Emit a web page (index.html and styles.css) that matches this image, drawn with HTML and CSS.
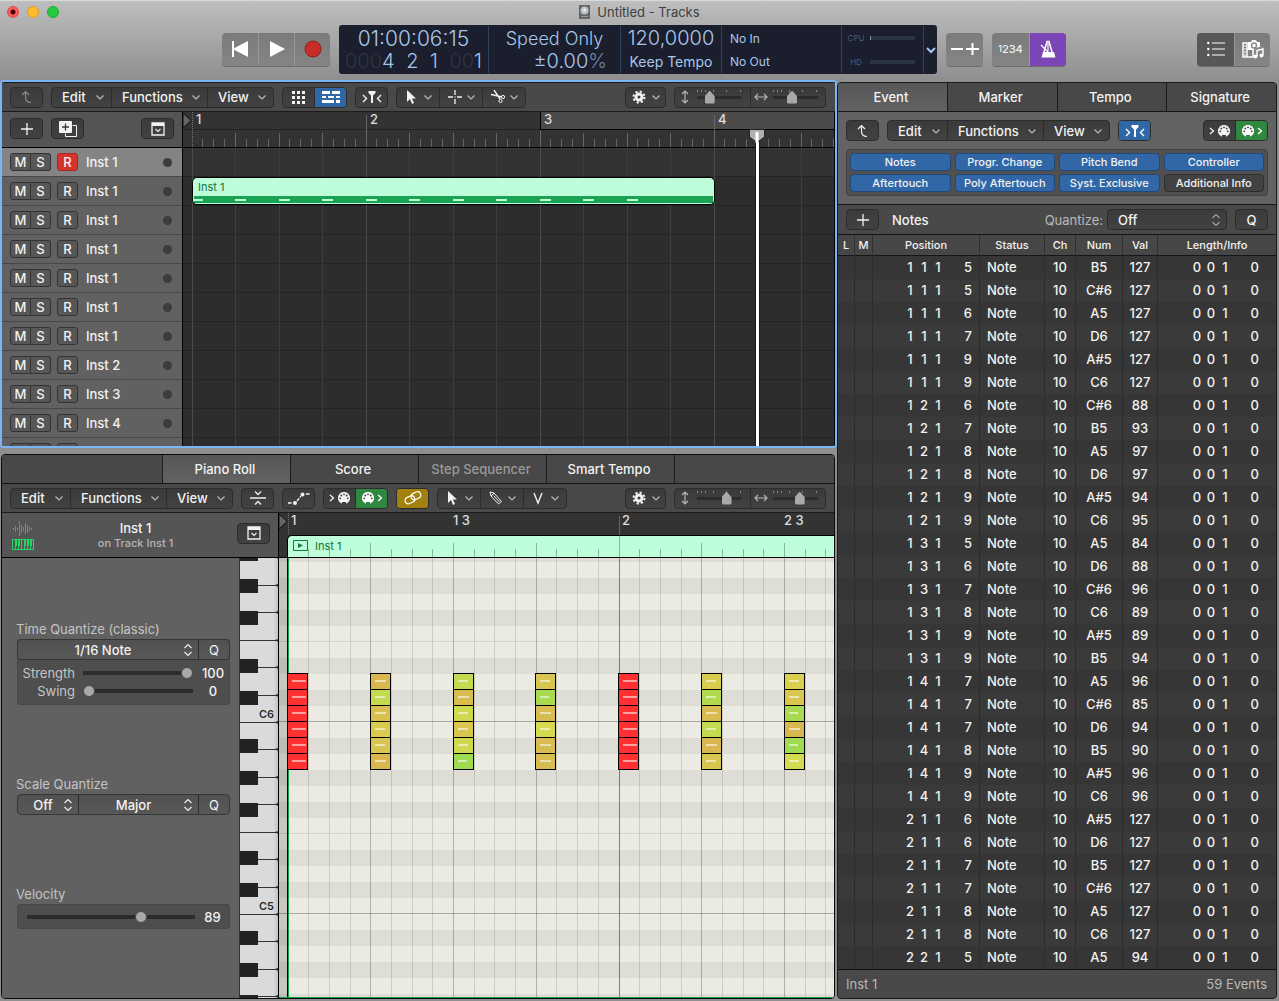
FILE: index.html
```html
<!DOCTYPE html>
<html lang="en">
<head>
    <meta charset="UTF-8">
    <meta name="viewport" content="width=device-width, initial-scale=1.0">
    <title>Untitled - Tracks</title>
    <link rel="stylesheet" href="styles.css">
</head>
<body>

    <!-- Icons -->
    <svg class="sprite" aria-hidden="true">
        <symbol id="caret" viewBox="0 0 10 10"><path d="M1.5 3.5 5 7l3.5-3.5" fill="none" stroke="currentColor" stroke-width="1.2"/></symbol>
        <symbol id="updown" viewBox="0 0 10 14"><path d="M1.5 5 5 1.5 8.5 5M1.5 9 5 12.5 8.5 9" fill="none" stroke="currentColor" stroke-width="1.1"/></symbol>
        <symbol id="hook" viewBox="0 0 16 16"><path d="M3 6 6.5 2.5 10 6M6.5 3v5c0 3.500 2 5.500 5.500 5.500" fill="none" stroke="currentColor" stroke-width="1.2"/></symbol>
        <symbol id="grid" viewBox="0 0 14 14"><path d="M0 1h3v3H0zM5 1h3v3H5zM10 1h3v3h-3zM0 6h3v3H0zM5 6h3v3H5zM10 6h3v3h-3zM0 11h3v3H0zM5 11h3v3H5zM10 11h3v3h-3z" fill="currentColor"/></symbol>
        <symbol id="rows" viewBox="0 0 18 14"><path d="M0 1h8v3H0zM10 1h8v3h-8zM0 6h4v2H0zM6 6h6v2H6zM14 6h4v2h-4zM0 10h12v3H0zM14 10h4v3h-4z" fill="currentColor"/></symbol>
        <symbol id="catch" viewBox="0 0 20 16"><path d="M6.500 2h7v2l-2.500 2.500V14H9V6.500L6.500 4z" fill="currentColor"/><path d="m1 6 3.500 3.500L1 13M19 6l-3.500 3.500L19 13" fill="none" stroke="currentColor" stroke-width="1.4"/></symbol>
        <symbol id="pointer" viewBox="0 0 12 16"><path d="M2 1v12l3-3 2 5 2-1-2-4.500h4z" fill="currentColor"/></symbol>
        <symbol id="cross" viewBox="0 0 14 14"><path d="M7 0v5M7 9v5M0 7h5M9 7h5M7 6.500v1" stroke="currentColor" stroke-width="1.3"/></symbol>
        <symbol id="scissors" viewBox="0 0 14 14"><path d="M0 4.500 11 7M3 0l6 9" stroke="currentColor" stroke-width="1.4"/><circle cx="12" cy="7" r="1.600" fill="none" stroke="currentColor"/><circle cx="9.500" cy="11" r="1.600" fill="none" stroke="currentColor"/></symbol>
        <symbol id="gear" viewBox="0 0 14 14"><circle cx="7" cy="7" r="5.500" fill="none" stroke="currentColor" stroke-width="2" stroke-dasharray="2.160 2.160"/><circle cx="7" cy="7" r="3" fill="none" stroke="currentColor" stroke-width="3"/></symbol>
        <symbol id="vzoom" viewBox="0 0 14 14"><path d="M7 1v12M4 4l3-3 3 3M4 10l3 3 3-3" fill="none" stroke="currentColor" stroke-width="1.2"/></symbol>
        <symbol id="hzoom" viewBox="0 0 14 14"><path d="M1 7h12M4 4 1 7l3 3M10 4l3 3-3 3" fill="none" stroke="currentColor" stroke-width="1.2"/></symbol>
        <symbol id="plus" viewBox="0 0 12 12"><path d="M6 0v12M0 6h12" stroke="currentColor" stroke-width="1.3"/></symbol>
        <symbol id="dup" viewBox="0 0 18 16"><path d="M13.500 4.500h4v11h-11v-3" fill="none" stroke="currentColor"/><path d="M1 0h11a1 1 0 0 1 1 1v10a1 1 0 0 1-1 1H1a1 1 0 0 1-1-1V1a1 1 0 0 1 1-1z" fill="currentColor"/><path d="M6.500 2.500v7M3 6h7" stroke="#3a3a3a" stroke-width="1.3"/></symbol>
        <symbol id="panel" viewBox="0 0 14 14"><path d="M1 1h12v12H1z" fill="none" stroke="currentColor" stroke-width="1.3"/><path d="M1 1h12v3H1z" fill="currentColor"/><path d="m4.500 7 2.500 2.500L9.500 7" fill="none" stroke="currentColor" stroke-width="1.2"/></symbol>
        <symbol id="midi-in" viewBox="0 0 22 14"><path d="m1 4 3.500 3L1 10" fill="none" stroke="currentColor" stroke-width="1.3"/><use href="#din" x="9" y="1" width="12" height="12"/></symbol>
        <symbol id="midi-out" viewBox="0 0 22 14"><path d="m17 4 3.500 3L17 10" fill="none" stroke="currentColor" stroke-width="1.3"/><use href="#din" x="1" y="1" width="12" height="12"/></symbol>
        <symbol id="din" viewBox="0 0 12 12"><path d="M6 0a6 6 0 0 1 4 10.500l-2 1.300V10H4v1.800l-2-1.300A6 6 0 0 1 6 0z" fill="currentColor"/><g fill="#3c3c3c"><circle cx="6" cy="2.300" r=".9"/><circle cx="3.300" cy="3.500" r=".9"/><circle cx="8.700" cy="3.500" r=".9"/><circle cx="2.200" cy="6.300" r=".9"/><circle cx="9.800" cy="6.300" r=".9"/></g></symbol>
        <symbol id="collapse" viewBox="0 0 16 16"><path d="M0 8h16M5 1.500 8 4.500l3-3M5 14.500l3-3 3 3" fill="none" stroke="currentColor" stroke-width="1.3"/></symbol>
        <symbol id="automation" viewBox="0 0 22 14"><path d="M0 12h4M18 3h4M9 10l4-5" stroke="currentColor" stroke-width="1.3" stroke-dasharray="3.500 1.200"/><circle cx="7" cy="12" r="2" fill="currentColor"/><circle cx="14.500" cy="3.500" r="2" fill="currentColor"/></symbol>
        <symbol id="link" viewBox="0 0 20 16"><g fill="none" stroke="currentColor" stroke-width="1.2"><rect x="8" y="2.500" width="10" height="6.500" rx="3.200" transform="rotate(-25 13 6)"/><rect x="2" y="6.500" width="10" height="6.500" rx="3.200" transform="rotate(-25 7 10)"/></g></symbol>
        <symbol id="pencil" viewBox="0 0 14 14"><path d="M1 1 2 5l7.500 8 3-2.500L5 2zM2 5l3-3M4.500 4.500l6 6.500" fill="none" stroke="currentColor"/></symbol>
        <symbol id="velocity" viewBox="0 0 12 14"><path d="M2 2 6 12 10 2" fill="none" stroke="currentColor" stroke-width="1.400"/></symbol>
    </svg>

    <header class="titlebar">
        <div class="title-row">
            <div class="lights">
                <button class="light close" aria-label="Close"></button>
                <button class="light minimize" aria-label="Minimize"></button>
                <button class="light full" aria-label="Full screen"></button>
            </div>
            <h1>
                <svg width="11" height="14" viewBox="0 0 11 14"><path d="M0 0h11v14H0z" fill="#656565"/><circle cx="5.500" cy="5.500" r="4" fill="#b9c2c9"/><circle cx="5.500" cy="5" r="1.500" fill="#edf2f5"/><path d="M2 11.500h7" stroke="#999"/></svg>
                Untitled - Tracks
            </h1>
        </div>

        <div class="control-row">
            <div class="center-controls">
                <div class="big-group">
                    <button aria-label="Go to beginning"><svg width="16" height="16" viewBox="0 0 16 16"><path d="M0 0h2v7.200L16 0v16L2 8.800V16H0z" fill="#fff"/></svg></button>
                    <button aria-label="Play"><svg width="16" height="16" viewBox="0 0 16 16"><path d="M1 0v16l15-8z" fill="#fff"/></svg></button>
                    <button aria-label="Record"><svg width="18" height="18" viewBox="0 0 18 18"><circle cx="9" cy="9" r="8" fill="#c82d28" stroke="#8f1f1b"/></svg></button>
                </div>

                <div class="lcd">
                    <div class="lcd-cell lcd-position">
                        <div class="lcd-clock">01:00:06:15</div>
                        <div class="lcd-big lcd-bars"><span><i>000</i>4</span><span>2</span><span>1</span><span><i>00</i>1</span></div>
                    </div>
                    <div class="lcd-cell lcd-speed">
                        <div class="lcd-text">Speed Only</div>
                        <div class="lcd-big lcd-percent">±0.00<em>%</em></div>
                    </div>
                    <div class="lcd-cell lcd-tempo">
                        <div class="lcd-big">120,0000</div>
                        <div class="lcd-mid">Keep Tempo</div>
                    </div>
                    <div class="lcd-cell lcd-io">
                        <div>No In</div>
                        <div>No Out</div>
                    </div>
                    <div class="lcd-cell lcd-load">
                        <div><span>CPU</span><b class="used"></b></div>
                        <div><span>HD</span><b></b></div>
                    </div>
                    <button class="lcd-more" aria-label="Display mode"><svg width="10" height="10"><path d="M1 3l4 4 4-4" fill="none" stroke="#a9c6ea" stroke-width="2"/></svg></button>
                </div>

                <div class="big-group">
                    <button class="wide" aria-label="Varispeed"><svg width="28" height="14" viewBox="0 0 28 14"><path d="M0 7h12M15 7h13M21.500 1v12" stroke="#fff" stroke-width="2"/></svg></button>
                </div>
                <div class="big-group">
                    <button class="count-in">1<b>234</b></button>
                    <button class="metronome" aria-label="Metronome"><svg width="18" height="18" viewBox="0 0 18 18"><path d="m5 12 3-10.500h2L13 12" fill="none" stroke="#fff" stroke-width="1.500"/><path d="M4 12h11l1.500 5.500h-14z" fill="#fff"/><path d="m2 5 8 8M9 3v8" stroke="#fff" stroke-width="1.200"/></svg></button>
                </div>
            </div>

            <div class="big-group right-controls">
                <button class="on" aria-label="List editors"><svg width="18" height="16" viewBox="0 0 18 16"><path d="M5 2h13M5 8h13M5 14h13" stroke="#fff" stroke-width="1.2"/><g fill="#fff"><circle cx="1.300" cy="2" r="1.200"/><circle cx="1.300" cy="8" r="1.200"/><circle cx="1.300" cy="14" r="1.200"/></g></svg></button>
                <button aria-label="Browsers"><svg width="22" height="20" viewBox="0 0 22 20"><path d="M1 4h4v14H1zM5 10h6v8H5z" fill="none" stroke="#fff" stroke-width="1.500"/><path d="M2 7h2M2 10h2M2 13h2M2 16h2" stroke="#fff"/><path d="M6 3h3l1-2h4l1 2h3v8H6z" fill="#fff"/><circle cx="12" cy="6.500" r="2.500" fill="#fff" stroke="#8a8a8a" stroke-width="1.400"/><path d="M14 17v-6l7-2v7" fill="none" stroke="#8a8a8a" stroke-width="4"/><path d="M15 17v-5.500l6-1.500v6" fill="none" stroke="#fff" stroke-width="1.400"/><circle cx="13.500" cy="17.500" r="2" fill="#fff"/><circle cx="19.500" cy="16.500" r="2" fill="#fff"/></svg></button>
            </div>
        </div>
    </header>

    <main>
        <div class="left-side">

            <!-- Tracks area -->
            <section class="tracks-panel">
                <div class="toolbar">
                    <div class="group"><button class="dim" aria-label="Up"><svg width="16" height="16"><use href="#hook"/></svg></button></div>
                    <div class="group menus">
                        <button>Edit <svg width="10" height="10"><use href="#caret"/></svg></button>
                        <button>Functions <svg width="10" height="10"><use href="#caret"/></svg></button>
                        <button>View <svg width="10" height="10"><use href="#caret"/></svg></button>
                    </div>
                    <div class="group">
                        <button aria-label="Grid"><svg width="14" height="14"><use href="#grid"/></svg></button>
                        <button class="blue" aria-label="Linear"><svg width="18" height="14"><use href="#rows"/></svg></button>
                    </div>
                    <div class="group"><button aria-label="Catch"><svg width="20" height="16"><use href="#catch"/></svg></button></div>
                    <div class="group tools">
                        <button aria-label="Pointer tool"><svg width="12" height="16"><use href="#pointer"/></svg><svg width="10" height="10"><use href="#caret"/></svg></button>
                        <button aria-label="Marquee tool"><svg width="14" height="14"><use href="#cross"/></svg><svg width="10" height="10"><use href="#caret"/></svg></button>
                        <button aria-label="Scissors tool"><svg width="14" height="14"><use href="#scissors"/></svg><svg width="10" height="10"><use href="#caret"/></svg></button>
                    </div>
                    <div class="group tools push"><button aria-label="Settings"><svg width="14" height="14"><use href="#gear"/></svg><svg width="10" height="10"><use href="#caret"/></svg></button></div>
                    <div class="group zooms">
                        <label><svg width="14" height="14"><use href="#vzoom"/></svg><input type="range" value="22" aria-label="Vertical zoom"></label>
                        <label><svg width="14" height="14"><use href="#hzoom"/></svg><input type="range" value="40" aria-label="Horizontal zoom"></label>
                    </div>
                </div>

                <div class="tracks-body">
                    <div class="track-column">
                        <div class="track-tools">
                            <div class="group"><button aria-label="Add track"><svg width="12" height="12"><use href="#plus"/></svg></button></div>
                            <div class="group"><button aria-label="Duplicate track"><svg width="18" height="16"><use href="#dup"/></svg></button></div>
                            <div class="group push"><button aria-label="Header options"><svg width="14" height="14"><use href="#panel"/></svg></button></div>
                        </div>
                        <div class="track-list" id="trackList"></div>
                    </div>
                    <div class="arrange">
                        <svg class="arrange-ruler" id="arrangeRuler"></svg>
                        <div class="arrange-canvas">
                            <div id="laneList"></div>
                            <svg class="beat-lines" id="beatLines"></svg>
                            <div class="region" id="region"><span>Inst 1</span><svg class="region-notes" id="regionNotes"></svg></div>
                        </div>
                        <div class="playhead"><svg width="16" height="14" viewBox="0 0 16 14"><path d="M.5.5h15V8L8 13.500.5 8z" fill="#b0b0b0" stroke="#222"/><path d="M6.500 3h3v11h-3z" fill="#fff"/></svg></div>
                    </div>
                </div>
            </section>

            <!-- Piano roll -->
            <section class="editor-panel">
                <nav class="tabs editor-tabs">
                    <span></span>
                    <button class="active">Piano Roll</button>
                    <button>Score</button>
                    <button disabled>Step Sequencer</button>
                    <button>Smart Tempo</button>
                    <span></span>
                </nav>
                <div class="toolbar">
                    <div class="group menus">
                        <button>Edit <svg width="10" height="10"><use href="#caret"/></svg></button>
                        <button>Functions <svg width="10" height="10"><use href="#caret"/></svg></button>
                        <button>View <svg width="10" height="10"><use href="#caret"/></svg></button>
                    </div>
                    <div class="group"><button aria-label="Collapse"><svg width="16" height="16"><use href="#collapse"/></svg></button></div>
                    <div class="group"><button aria-label="Automation"><svg width="22" height="14"><use href="#automation"/></svg></button></div>
                    <div class="group">
                        <button aria-label="MIDI in"><svg width="22" height="14"><use href="#midi-in"/></svg></button>
                        <button class="green" aria-label="MIDI out"><svg width="22" height="14"><use href="#midi-out"/></svg></button>
                    </div>
                    <div class="group"><button class="gold" aria-label="Link"><svg width="20" height="16"><use href="#link"/></svg></button></div>
                    <div class="group tools">
                        <button aria-label="Pointer tool"><svg width="12" height="16"><use href="#pointer"/></svg><svg width="10" height="10"><use href="#caret"/></svg></button>
                        <button aria-label="Pencil tool"><svg width="14" height="14"><use href="#pencil"/></svg><svg width="10" height="10"><use href="#caret"/></svg></button>
                        <button aria-label="Velocity tool"><svg width="12" height="14"><use href="#velocity"/></svg><svg width="10" height="10"><use href="#caret"/></svg></button>
                    </div>
                    <div class="group tools push"><button aria-label="Settings"><svg width="14" height="14"><use href="#gear"/></svg><svg width="10" height="10"><use href="#caret"/></svg></button></div>
                    <div class="group zooms">
                        <label><svg width="14" height="14"><use href="#vzoom"/></svg><input type="range" value="70" aria-label="Vertical zoom"></label>
                        <label><svg width="14" height="14"><use href="#hzoom"/></svg><input type="range" value="62" aria-label="Horizontal zoom"></label>
                    </div>
                </div>

                <div class="editor-body">
                    <div class="editor-side">
                        <div class="region-head">
                            <svg width="22" height="30" viewBox="0 0 22 30"><path d="M1.500 7v2M3.500 5v6M5.500 7v2M7.500 0v15M9.500 4v8M11.500 6v4M13.500 2v11M15.500 4v8M17.500 6v4M19.500 7v2" stroke="#2fc868" opacity=".8"/><path d="M.5 18.500h21v10H.5zM3.500 19v10M6.500 19v10M9.500 19v10M12.500 19v10M15.500 19v10M18.500 19v10" fill="none" stroke="#22d663"/><path d="M4 19v6M7 19v6M13 19v6M16 19v6M19 19v6" stroke="#22d663" stroke-width="2"/></svg>
                            <div class="region-name"><strong>Inst 1</strong><small>on Track Inst 1</small></div>
                            <div class="group"><button aria-label="Header options"><svg width="14" height="14"><use href="#panel"/></svg></button></div>
                        </div>
                        <div class="editor-low">
                            <div class="inspector">
                                <div class="block">
                                    <label for="timeQuantize">Time Quantize (classic)</label>
                                    <div class="box">
                                        <div class="group pick-row">
                                            <div class="pick"><select id="timeQuantize"><option>1/16 Note</option></select><svg width="10" height="14"><use href="#updown"/></svg></div>
                                            <button>Q</button>
                                        </div>
                                        <div class="sliders">
                                            <label for="strength">Strength</label><input type="range" id="strength" value="100"><output>100</output>
                                            <label for="swing">Swing</label><input type="range" id="swing" value="0"><output>0</output>
                                        </div>
                                    </div>
                                </div>
                                <div class="block">
                                    <label for="scaleQuantize">Scale Quantize</label>
                                    <div class="group pick-row">
                                        <div class="pick small"><select id="scaleQuantize"><option>Off</option></select><svg width="10" height="14"><use href="#updown"/></svg></div>
                                        <div class="pick"><select aria-label="Scale"><option>Major</option></select><svg width="10" height="14"><use href="#updown"/></svg></div>
                                        <button>Q</button>
                                    </div>
                                </div>
                                <div class="block">
                                    <label for="velocityValue">Velocity</label>
                                    <div class="box velocity-box"><input type="range" id="velocityValue" min="0" max="127" value="88"><output>89</output></div>
                                </div>
                            </div>
                            <svg class="keyboard" id="keyboard"></svg>
                        </div>
                    </div>
                    <div class="roll-side">
                        <div class="roll-head">
                            <svg class="roll-ruler" id="rollRuler"></svg>
                            <div class="roll-region">
                                <svg class="roll-ticks" id="rollTicks"></svg>
                                <svg width="15" height="11" viewBox="0 0 15 11"><path d="M.5.5h14v10H.5z" fill="none" stroke="#147a3c"/><path d="M5 3v5l5-2.500z" fill="#147a3c"/></svg>
                                <span>Inst 1</span>
                            </div>
                        </div>
                        <div class="roll">
                            <svg class="roll-lines" id="rollLines"></svg>
                            <div id="rollNotes"></div>
                        </div>
                    </div>
                </div>
            </section>
        </div>

        <!-- Event list -->
        <section class="event-panel">
            <nav class="tabs event-tabs">
                <button class="active">Event</button>
                <button>Marker</button>
                <button>Tempo</button>
                <button>Signature</button>
            </nav>
            <div class="event-top">
                <div class="event-tools">
                    <div class="group"><button aria-label="Up"><svg width="16" height="16"><use href="#hook"/></svg></button></div>
                    <div class="group menus">
                        <button>Edit <svg width="10" height="10"><use href="#caret"/></svg></button>
                        <button>Functions <svg width="10" height="10"><use href="#caret"/></svg></button>
                        <button>View <svg width="10" height="10"><use href="#caret"/></svg></button>
                    </div>
                    <div class="group"><button class="blue" aria-label="Catch"><svg width="20" height="16"><use href="#catch"/></svg></button></div>
                    <div class="group push">
                        <button aria-label="MIDI in"><svg width="22" height="14"><use href="#midi-in"/></svg></button>
                        <button class="green" aria-label="MIDI out"><svg width="22" height="14"><use href="#midi-out"/></svg></button>
                    </div>
                </div>
                <div class="filters">
                    <button>Notes</button>
                    <button>Progr. Change</button>
                    <button>Pitch Bend</button>
                    <button>Controller</button>
                    <button>Aftertouch</button>
                    <button>Poly Aftertouch</button>
                    <button>Syst. Exclusive</button>
                    <button class="off">Additional Info</button>
                </div>
            </div>
            <div class="notes-bar">
                <div class="group"><button aria-label="Add event"><svg width="12" height="12"><use href="#plus"/></svg></button></div>
                <span class="notes-title">Notes</span>
                <label for="quantize">Quantize:</label>
                <div class="group"><div class="pick"><select id="quantize"><option>Off</option></select><svg width="10" height="14"><use href="#updown"/></svg></div></div>
                <div class="group"><button>Q</button></div>
            </div>
            <div class="events-wrap">
                <table>
                    <colgroup><col class="c-l"><col class="c-m"><col class="c-pos"><col class="c-status"><col class="c-ch"><col class="c-num"><col class="c-val"><col></colgroup>
                    <thead>
                        <tr><th>L</th><th>M</th><th>Position</th><th>Status</th><th>Ch</th><th>Num</th><th>Val</th><th>Length/Info</th></tr>
                    </thead>
                    <tbody id="events"></tbody>
                </table>
            </div>
            <footer><span>Inst 1</span><span>59 Events</span></footer>
        </section>
    </main>

    <script src="script.js"></script>
</body>
</html>
```
FILE: styles.css
```css
* {
    box-sizing: border-box;
}
body {
    margin: 0;
    height: 100vh;
    display: flex;
    flex-direction: column;
    background: #8f8f8f;
    color: #f2f2f2;
    font-family: Inter, "Liberation Sans", sans-serif;
    font-size: 13px;
    font-weight: 500;
    line-height: 16px;
    overflow: hidden;
}
button, select, input {
    font: inherit;
    color: inherit;
    margin: 0;
}
button {
    display: flex;
    align-items: center;
    justify-content: center;
    padding: 0;
    border: 0;
    background: none;
}
svg {
    display: block;
    flex: none;
}
.sprite {
    position: absolute;
    width: 0;
    height: 0;
}
.push {
    margin-left: auto;
}

/* Title bar */
.titlebar {
    flex: none;
    height: 80px;
    background: linear-gradient(#bebebe, #8f8f8f);
    border-top: 1px solid #d4dadd;
}
.title-row {
    display: grid;
    grid-template-columns: 1fr auto 1fr;
    align-items: center;
    height: 22px;
    padding: 0 7px;
}
.lights {
    display: flex;
    gap: 8px;
}
.light {
    width: 12px;
    height: 12px;
    border-radius: 50%;
}
.close {
    background: radial-gradient(circle, #4a0502 2px, #fc5b57 3px);
    border: 1px solid #df4744;
}
.minimize {
    background: #fdbc2e;
    border: 1px solid #dfa023;
}
.full {
    background: #27c840;
    border: 1px solid #1dad2b;
}
h1 {
    display: flex;
    align-items: center;
    gap: 7px;
    margin: 0;
    font-size: 13px;
    font-weight: 400;
    color: #404040;
}
.control-row {
    display: grid;
    grid-template-columns: 1fr auto 1fr;
    align-items: center;
    padding: 2px 9px 0 18px;
}
.center-controls {
    grid-column: 2;
    display: flex;
    align-items: center;
    gap: 9px;
}
.right-controls {
    justify-self: end;
}
.big-group {
    display: flex;
    height: 34px;
    border-radius: 4px;
    overflow: hidden;
    background: linear-gradient(#7b7b7b, #858585);
    border-bottom: 1px solid #6b6b6b;
}
.big-group button {
    width: 36px;
}
.big-group button + button {
    border-left: 1px solid #979797;
}
.big-group .wide, .big-group .count-in, .big-group .metronome, .big-group .on {
    width: 37px;
}
.big-group .on {
    background: #575757;
}
.big-group .metronome {
    background: #7b45b5;
}
.count-in {
    font-size: 9px;
}
.count-in b {
    font-size: 11px;
    font-weight: 500;
}
.lcd {
    display: flex;
    height: 49px;
    padding: 1px 0;
    border-radius: 3px;
    background: #1b1e2c;
    color: #a9c6ea;
    font-weight: 400;
}
.lcd-cell {
    display: flex;
    flex-direction: column;
    justify-content: center;
    text-align: center;
    border-right: 1px solid #304460;
}
.lcd-big, .lcd-clock, .lcd-text {
    font-size: 20px;
    font-weight: 300;
    line-height: 23px;
}
.lcd-clock {
    font-size: 21px;
}
.lcd-text {
    font-size: 18px;
}
.lcd-mid {
    font-size: 14px;
    line-height: 23px;
}
.lcd-position {
    width: 150px;
}
.lcd-bars {
    display: flex;
    justify-content: space-between;
    padding: 0 6px;
}
.lcd-bars i {
    font-style: normal;
    color: #303443;
}
.lcd-speed {
    width: 132px;
}
.lcd-percent {
    text-align: right;
    padding-right: 13px;
}
.lcd-percent em {
    font-style: normal;
    color: #7287a3;
}
.lcd-tempo {
    width: 101px;
}
.lcd-io {
    width: 120px;
    padding-left: 8px;
    text-align: left;
    font-size: 12px;
    line-height: 23px;
}
.lcd-load {
    width: 82px;
    padding: 0 8px 0 5px;
    font-size: 8px;
    line-height: 24px;
    color: #4a5d79;
}
.lcd-load div {
    display: flex;
    align-items: center;
    justify-content: space-between;
}
.lcd-load span {
    width: 18px;
}
.lcd-load b {
    width: 45px;
    height: 4px;
    background: #2a3445;
}
.lcd-load .used {
    border-left: 1px solid #7890b0;
}
.lcd-more {
    width: 13px;
}

/* Shared controls */
.group {
    display: flex;
    flex: none;
    height: 21px;
    border: 1px solid #2c2c2c;
    border-radius: 4px;
    background: linear-gradient(#3b3b3b, #424242);
    overflow: hidden;
}
.group button {
    width: 32px;
    border-radius: 0;
}
.group > :first-child {
    width: 31px;
}
.group > * + * {
    border-left: 1px solid #2c2c2c;
}
.group .dim {
    color: #8a8a8a;
}
.group .blue {
    background: #3067a6;
    color: #fff;
}
.group .green {
    background: #30873f;
    color: #fff;
}
.group .gold {
    background: #a3810f;
    color: #fff;
}
.menus button {
    justify-content: space-between;
    padding: 0 6px 0 10px;
}
.menus button:nth-child(1) {
    width: 59px;
}
.menus button:nth-child(2) {
    width: 96px;
}
.menus button:nth-child(3) {
    width: 66px;
}
.menus use, .tools svg + svg {
    color: #b9b9b9;
}
.group.tools > button {
    width: 43px;
    justify-content: space-between;
    padding: 0 6px 0 8px;
}
.group.tools > button:first-child {
    width: 42px;
}
.group.tools.push > button {
    width: 39px;
    padding: 0 4px 0 6px;
}
.group.zooms > label {
    width: 75px;
    display: flex;
    align-items: center;
    gap: 5px;
    padding-left: 3px;
    color: #b5b5b5;
}
.toolbar {
    display: flex;
    align-items: center;
    gap: 8px;
    height: 29px;
    padding: 0 8px;
    background: #494949;
    border-bottom: 1px solid #1c1c1c;
}
.tabs {
    display: flex;
    height: 29px;
    background: #484848;
    border-bottom: 1px solid #161616;
}
.tabs > * + * {
    border-left: 1px solid #1c1c1c;
}
.tabs button {
    padding-right: 3px;
}
.tabs button:disabled {
    color: #9a9a9a;
}
.tabs .active {
    background: linear-gradient(#575757, #626262);
}

/* Sliders */
input[type=range] {
    appearance: none;
    height: 17px;
    min-width: 0;
    background: linear-gradient(#2c2c2c, #2c2c2c) center / 100% 4px no-repeat;
}
input[type=range]::-webkit-slider-thumb {
    appearance: none;
    width: 12px;
    height: 12px;
    border: 1px solid #4a4a4a;
    border-radius: 50%;
    background: #a9a9a9;
}
.zooms input[type=range] {
    width: 45px;
    background:
        linear-gradient(90deg, #888 1px, transparent 1px 4px, #888 4px 5px, transparent 5px 8px, #888 8px 9px, transparent 9px 16px, #888 16px 17px, transparent 17px 29px, #888 29px 30px, transparent 30px 43px, #888 43px 44px, transparent 44px) 0 1px / 100% 2px no-repeat,
        linear-gradient(#2c2c2c, #2c2c2c) center / 100% 3px no-repeat;
}
.zooms input[type=range]::-webkit-slider-thumb {
    width: 10px;
    height: 13px;
    border: 0;
    border-radius: 2px;
    clip-path: polygon(50% 0, 100% 45%, 100% 100%, 0 100%, 0 45%);
}

/* Select boxes with arrows laid over them */
.pick {
    display: grid;
    align-items: center;
}
.pick select {
    grid-area: 1 / 1;
    appearance: none;
    width: 100%;
    height: 19px;
    padding: 0 26px 0 10px;
    border: 0;
    background: none;
}
.pick svg {
    grid-area: 1 / 1;
    justify-self: end;
    margin-right: 5px;
    pointer-events: none;
}

main {
    flex: 1;
    min-height: 0;
    display: grid;
    grid-template-columns: 1fr 440px;
    padding-right: 2px;
}
.left-side {
    display: grid;
    grid-template-rows: 368px 1fr;
    gap: 6px;
    min-width: 0;
    min-height: 0;
    padding-bottom: 2px;
}

/* Tracks */
.tracks-panel {
    display: flex;
    flex-direction: column;
    min-width: 0;
    min-height: 0;
    overflow: hidden;
    border: 2px solid #78b4f8;
    border-radius: 4px;
    background: #2d2d2d;
}
.tracks-panel .toolbar {
    flex: none;
    height: 30px;
    padding-right: 9px;
    border-top: 1px solid #1c1c1c;
}
.tracks-body {
    flex: 1;
    min-height: 0;
    display: grid;
    grid-template-columns: 181px 1fr;
}
.track-column {
    min-height: 0;
    overflow: hidden;
    background: #616161;
    border-right: 1px solid #000;
}
.track-tools {
    display: flex;
    align-items: center;
    gap: 8px;
    height: 36px;
    padding: 0 8px 2px;
    background: #545454;
    border-bottom: 1px solid #000;
}
.track {
    display: flex;
    align-items: center;
    height: 29px;
    padding: 0 10px 0 8px;
    border-bottom: 1px solid #484848;
}
.track.selected {
    background: #848484;
}
.track button {
    width: 21px;
    height: 18px;
    border: 1px solid #333;
    border-radius: 3px;
    background: #575757;
}
.track .mute {
    border-radius: 3px 0 0 3px;
}
.track .solo {
    width: 20px;
    border-left: 0;
    border-radius: 0 3px 3px 0;
}
.track .rec {
    margin: 0 8px 0 6px;
}
.track.selected .rec {
    background: #d5322b;
    border-color: #a52822;
}
.track .dot {
    width: 9px;
    height: 9px;
    margin-left: auto;
    border-radius: 50%;
    background: #3c3c3c;
}
.arrange {
    position: relative;
    min-width: 0;
    min-height: 0;
    overflow: hidden;
    border-right: 1px solid #000;
}
.arrange-ruler {
    width: 100%;
    height: 36px;
    background: #333;
    border-bottom: 1px solid #000;
}
.arrange-canvas {
    position: relative;
}
.lane {
    height: 29px;
    background: #2d2d2d;
    border-bottom: 1px solid #232323;
}
.lane:first-child {
    background: #333;
}
.beat-lines {
    position: absolute;
    top: 0;
    left: 0;
    width: 100%;
    height: 100%;
}
.region {
    position: absolute;
    top: 29px;
    height: 28px;
    display: flex;
    flex-direction: column;
    justify-content: space-between;
    padding: 0 1px 1px;
    overflow: hidden;
    border: 1px solid #000;
    border-radius: 5px;
    background: #befdd9;
    color: #14743a;
}
.region span {
    padding: 1px 4px;
    font-size: 11px;
    font-weight: 400;
}
.region-notes {
    width: 100%;
    height: 7px;
    background: #1aa352;
}
.playhead {
    position: absolute;
    top: 17px;
    bottom: 0;
    left: 566px;
    width: 16px;
    background: linear-gradient(90deg, transparent 6px, #1a1a1a 6px 7px, #fff 7px 10px, #1a1a1a 10px 11px, transparent 11px);
}
.ruler-num {
    fill: #ddd;
    font-size: 13px;
}

/* Piano roll */
.editor-panel {
    display: flex;
    flex-direction: column;
    min-width: 0;
    min-height: 0;
    margin: 0 2px 0 1px;
    overflow: hidden;
    border: 1px solid #0a0a0a;
    border-radius: 4px;
}
.editor-tabs, .editor-panel .toolbar {
    flex: none;
}
.editor-tabs > * {
    width: 128px;
}
.editor-tabs > :first-child {
    width: 160px;
}
.editor-tabs > :last-child {
    flex: 1;
}
.editor-body {
    flex: 1;
    min-height: 0;
    display: grid;
    grid-template-columns: 277px 1fr;
}
.editor-side {
    display: flex;
    flex-direction: column;
    min-height: 0;
    border-right: 1px solid #000;
}
.region-head {
    flex: none;
    display: flex;
    align-items: center;
    height: 45px;
    padding: 0 8px 4px 10px;
    background: #555;
    border-bottom: 1px solid #000;
}
.region-head > svg, .region-name {
    margin-top: 5px;
}
.region-name {
    flex: 1;
    text-align: center;
}
.region-name strong, .region-name small {
    display: block;
    font-weight: 500;
    line-height: 15px;
}
.region-name small {
    font-size: 11px;
    color: #b5b5b5;
}
.editor-low {
    flex: 1;
    min-height: 0;
    display: grid;
    grid-template-columns: 1fr 39px;
}
.inspector {
    display: flex;
    flex-direction: column;
    gap: 71px;
    padding: 63px 9px 0 15px;
    background: #616161;
}
.block > label {
    display: block;
    margin-left: -1px;
    color: #c4c4c4;
    font-weight: 400;
}
.box {
    border-radius: 4px;
    background: #4e4e4e;
    box-shadow: inset 0 0 0 1px #474747;
}
.block > .box, .block > .group {
    margin-top: 2px;
}
.pick-row {
    background: linear-gradient(#515151, #585858);
    border-color: #363636;
}
.group.pick-row > .pick {
    flex: 1;
}
.group.pick-row > .pick.small {
    flex: none;
    width: 60px;
}
.group.pick-row > .small select {
    padding: 0 15px 0 5px;
}
.pick-row select {
    padding: 0 20px 0 10px;
    text-align: center;
    text-align-last: center;
}
.group.pick-row > button {
    width: 31px;
    font-weight: 400;
}
.sliders {
    display: grid;
    grid-template-columns: 58px 110px 1fr;
    grid-auto-rows: 18px;
    align-items: center;
    gap: 0 8px;
    padding: 4px 5px 5px 0;
}
.sliders label {
    text-align: right;
    font-weight: 400;
    color: #c4c4c4;
}
output {
    text-align: center;
}
.velocity-box {
    display: flex;
    align-items: center;
    height: 25px;
    padding: 0 0 0 10px;
}
.velocity-box input {
    width: 168px;
}
.velocity-box output {
    flex: 1;
}
.keyboard {
    width: 39px;
    height: 100%;
    background: linear-gradient(90deg, #333 1px, #dadadc 1px 34px, #c4c4c6);
}
.keyboard text {
    fill: #2b2b2b;
    font-size: 11px;
    font-weight: 600;
}
.roll-side {
    display: flex;
    flex-direction: column;
    min-width: 0;
    min-height: 0;
}
.roll-head {
    flex: none;
    height: 45px;
    background: #333;
    border-bottom: 1px solid #000;
}
.roll-ruler {
    width: 100%;
    height: 22px;
}
.roll-region {
    position: relative;
    display: flex;
    align-items: center;
    gap: 7px;
    height: 22px;
    margin-left: 8px;
    padding: 0 0 2px 5px;
    border-top: 1px solid #000;
    border-left: 1px solid #000;
    border-radius: 5px 0 0 0;
    background: #befdd9;
    color: #14743a;
    font-size: 11px;
    font-weight: 400;
}
.roll-ticks {
    position: absolute;
    top: 0;
    left: -1px;
    width: 100%;
    height: 100%;
}
.roll {
    position: relative;
    flex: 1;
    min-height: 0;
    overflow: hidden;
    /* One octave from B down to C */
    background: linear-gradient(#ebebe3 16px, #deded6 16px 32px, #ebebe3 32px 48px, #deded6 48px 64px, #ebebe3 64px 80px, #deded6 80px 96px, #ebebe3 96px 111px, #d2d2cb 111px 112px, #ebebe3 112px 128px, #deded6 128px 144px, #ebebe3 144px 160px, #deded6 160px 176px, #ebebe3 176px 191px, #a9a9a4 191px) 0 -28px / 100% 192px;
}
.roll-lines {
    position: absolute;
    top: 0;
    left: 0;
    width: 100%;
    height: 100%;
    border-bottom: 1px solid #14a04a;
}
.note {
    position: absolute;
    height: 17px;
    border: 1px solid #000;
    background: linear-gradient(rgba(255, 255, 255, .55), rgba(255, 255, 255, .55)) 4px 6px no-repeat;
}

/* Event list */
.event-panel {
    display: flex;
    flex-direction: column;
    min-height: 0;
    margin: 2px 0;
    overflow: hidden;
    border: 1px solid #1a1a1a;
    border-radius: 4px;
    background: #363636;
}
.event-tabs {
    flex: none;
}
.event-tabs button {
    flex: 1;
}
.event-top {
    flex: none;
    padding: 8px;
    background: #636363;
    border-bottom: 1px solid #161616;
}
.event-tools {
    display: flex;
    gap: 8px;
    margin-bottom: 8px;
}
.filters {
    display: grid;
    grid-template-columns: repeat(4, 1fr);
    gap: 3px 4px;
    padding: 3px;
    border: 1px solid #414141;
    border-radius: 4px;
    background: #505050;
}
.filters button {
    height: 18px;
    border: 1px solid #204a7c;
    border-radius: 4px;
    background: #3167a6;
    font-size: 11px;
}
.filters .off {
    background: #424242;
    border-color: #2e2e2e;
}
.notes-bar {
    flex: none;
    display: flex;
    align-items: center;
    height: 30px;
    padding: 0 8px;
    background: #494949;
    border-bottom: 1px solid #161616;
}
.notes-bar label {
    margin: 0 4px 0 auto;
    color: #b9b9b9;
    font-weight: 400;
}
.notes-title {
    margin-left: 13px;
}
.notes-bar .group > .pick {
    width: 118px;
}
.notes-bar .pick svg {
    color: #a5a5a5;
}
.notes-bar > :last-child {
    margin-left: 8px;
}
.events-wrap {
    flex: 1;
    min-height: 0;
    overflow: hidden;
}
table {
    width: 100%;
    table-layout: fixed;
    border-collapse: separate;
    border-spacing: 0;
}
.c-l {
    width: 17px;
}
.c-m {
    width: 18px;
}
.c-pos {
    width: 107px;
}
.c-status {
    width: 65px;
}
.c-ch {
    width: 31px;
}
.c-num {
    width: 47px;
}
.c-val {
    width: 35px;
}
th {
    height: 21px;
    padding: 0;
    background: #464646;
    border-bottom: 1px solid #161616;
    font-size: 11px;
    font-weight: 500;
}
th:not(:last-child) {
    border-right: 1px solid #303030;
}
td {
    height: 23px;
    padding: 0 0 2px;
    text-align: center;
    border-right: 1px solid #2c2c2c;
}
td:last-child {
    border-right: 0;
}
tbody tr:nth-child(even) {
    background: #3a3a3a;
}
td.status {
    padding-left: 7px;
    text-align: left;
}
.digits {
    display: grid;
    grid-template-columns: 14px 14px 14px 1fr;
    text-align: center;
    padding-left: 30px;
}
.digits :last-child {
    text-align: right;
    padding-right: 7px;
}
.length .digits {
    padding-left: 32px;
}
.length .digits :last-child {
    padding-right: 17px;
}
footer {
    flex: none;
    display: flex;
    align-items: center;
    justify-content: space-between;
    height: 29px;
    padding: 0 9px 0 8px;
    background: #494949;
    border-top: 1px solid #111;
    color: #b9b9b9;
    font-weight: 400;
}
```
FILE: script.js
```js
const tracks = ['Inst 1', 'Inst 1', 'Inst 1', 'Inst 1', 'Inst 1', 'Inst 1', 'Inst 1', 'Inst 2', 'Inst 3', 'Inst 4', 'Inst 5'];

// position, tick, note, velocity
const events = [
    ['1 1 1', 5, 'B5', 127], ['1 1 1', 5, 'C#6', 127], ['1 1 1', 6, 'A5', 127],
    ['1 1 1', 7, 'D6', 127], ['1 1 1', 9, 'A#5', 127], ['1 1 1', 9, 'C6', 127],
    ['1 2 1', 6, 'C#6', 88], ['1 2 1', 7, 'B5', 93], ['1 2 1', 8, 'A5', 97],
    ['1 2 1', 8, 'D6', 97], ['1 2 1', 9, 'A#5', 94], ['1 2 1', 9, 'C6', 95],
    ['1 3 1', 5, 'A5', 84], ['1 3 1', 6, 'D6', 88], ['1 3 1', 7, 'C#6', 96],
    ['1 3 1', 8, 'C6', 89], ['1 3 1', 9, 'A#5', 89], ['1 3 1', 9, 'B5', 94],
    ['1 4 1', 7, 'A5', 96], ['1 4 1', 7, 'C#6', 85], ['1 4 1', 7, 'D6', 94],
    ['1 4 1', 8, 'B5', 90], ['1 4 1', 9, 'A#5', 96], ['1 4 1', 9, 'C6', 96],
    ['2 1 1', 6, 'A#5', 127], ['2 1 1', 6, 'D6', 127], ['2 1 1', 7, 'B5', 127],
    ['2 1 1', 7, 'C#6', 127], ['2 1 1', 8, 'A5', 127], ['2 1 1', 8, 'C6', 127],
    ['2 2 1', 5, 'A5', 94], ['2 2 1', 6, 'D6', 93], ['2 2 1', 6, 'C#6', 86],
    ['2 2 1', 7, 'C6', 96], ['2 2 1', 8, 'B5', 88], ['2 2 1', 9, 'A#5', 97],
    ['2 3 1', 5, 'D6', 92], ['2 3 1', 6, 'C#6', 94], ['2 3 1', 6, 'C6', 85],
    ['2 3 1', 7, 'B5', 97], ['2 3 1', 8, 'A#5', 84], ['2 3 1', 9, 'A5', 90]
];
const visibleEvents = 31;
const pitches = ['D6', 'C#6', 'C6', 'B5', 'A#5', 'A5'];

const byId = id => document.getElementById(id);
const line = (x, y1, y2, color) => `<rect x="${x}" y="${y1}" width="1" height="${y2 - y1}" fill="${color}"/>`;

// Track headers and lanes
byId('trackList').innerHTML = tracks.map((name, i) => `
    <div class="track${i === 0 ? ' selected' : ''}">
        <button class="mute">M</button><button class="solo">S</button><button class="rec">R</button>
        <span>${name}</span><span class="dot"></span>
    </div>`).join('');
byId('laneList').innerHTML = tracks.map(() => '<div class="lane"></div>').join('');

// Arrange ruler
const arrangeStart = 9;
const barWidth = 174;
const arrangeWidth = byId('arrangeRuler').clientWidth;
let ruler = `<rect x="${arrangeStart + barWidth * 2}" width="2000" height="17" fill="#4b4b4b"/>
    <rect y="17" width="${arrangeStart + barWidth * 2}" height="1" fill="#222"/>
    <rect x="${arrangeStart + barWidth * 2 - 1}" y="17" width="2000" height="1" fill="#000"/>
    <path d="M0 1 8 8.500 0 16z" fill="#666" stroke="#111"/>`;
let beats = '';
for (let i = 0; arrangeStart + i * barWidth / 16 < arrangeWidth; i++) {
    const x = Math.floor(arrangeStart + i * barWidth / 16);
    if (i === 0) {
        ruler += `<path d="M9.500 0v36" stroke="#777" stroke-dasharray="1 1"/>`;
    } else if (i % 16 === 0) {
        ruler += i === 32 ? line(x, 0, 17, '#000') + line(x, 18, 36, '#666') : line(x, 3, 36, '#666');
    } else {
        ruler += line(x, i % 4 === 0 ? 21 : 27, 36, '#666');
    }
    if (i % 4 === 0) {
        beats += line(x, 0, 400, i % 16 === 0 ? '#4b4b4b' : '#3e3e3e');
    }
    if (i % 16 === 0) {
        ruler += `<text class="ruler-num" x="${x + 4}" y="12">${i / 16 + 1}</text>`;
    }
}
byId('arrangeRuler').innerHTML = ruler;
byId('beatLines').innerHTML = beats;

// Region on the second track
const region = byId('region');
region.style.left = arrangeStart + 'px';
region.style.width = barWidth * 3 + 1 + 'px';
let dashes = '';
for (let i = 0; i <= 10; i++) {
    dashes += `<rect x="${Math.max(0, Math.floor(i * barWidth / 4) - 2)}" y="3" width="${i === 0 ? 9 : 11}" height="2" fill="#befdd9"/>`;
}
byId('regionNotes').innerHTML = dashes;

// Keyboard, octave C6 ends at 164px
const octaveBase = 164;
const octave = 192;
const keyboardHeight = byId('keyboard').clientHeight;
let keys = '';
for (let o = -2; o <= 3; o++) {
    const bottom = octaveBase + o * octave;
    for (let k = 0; k < 7; k++) {
        const y = Math.round(bottom - k * octave / 7);
        const x = k === 0 || k === 3 ? 1 : 19;
        keys += `<rect x="${x}" y="${y}" width="${39 - x}" height="1" fill="#333"/><path d="M36 ${y}l3-1v3z" fill="#333"/>`;
    }
    [1, 3, 6, 8, 10].forEach(semi => {
        keys += `<rect x="1" y="${bottom - semi * 16 - 15}" width="18" height="14" fill="#222"/>`;
    });
    if (bottom > 0 && bottom < keyboardHeight) {
        keys += `<text x="20" y="${bottom - 4}">C${6 - o}</text>`;
    }
}
byId('keyboard').innerHTML = keys;

// Piano roll ruler and grid
const rollStart = 9;
const rollBar = 331;
const rollWidth = byId('rollRuler').clientWidth;
let rollRuler = `<path d="M0 1 8 8.500 0 16z" fill="#666" stroke="#111"/><path d="M9.500 0v22" stroke="#777" stroke-dasharray="1 1"/>`;
let ticks = '';
let gridLines = `<rect width="${rollStart}" height="1000" fill="#000" opacity=".15"/>`;
for (let i = 0; rollStart + i * rollBar / 16 < rollWidth; i++) {
    const x = Math.floor(rollStart + i * rollBar / 16);
    const isBar = i % 16 === 0;
    const isBeat = i % 4 === 0;
    if (i > 0) {
        ticks += line(x - 8, isBar ? 0 : isBeat ? 7 : 13, 21, '#86b89b');
        gridLines += line(x, 0, 1000, isBar ? 'rgba(0,0,0,.45)' : isBeat ? 'rgba(0,0,0,.25)' : 'rgba(0,0,0,.12)');
    }
    if (isBar && i > 0) {
        rollRuler += line(x, 3, 22, '#666');
    }
    if (i % 8 === 0) {
        rollRuler += `<text class="ruler-num" x="${x + (isBar ? 3 : 0)}" y="12">${Math.floor(i / 16) + 1}${isBar ? '' : ' 3'}</text>`;
    }
}
gridLines += line(rollStart - 1, 0, 1000, '#000') + line(rollStart, 0, 1000, '#14a04a');
byId('rollRuler').innerHTML = rollRuler;
byId('rollTicks').innerHTML = ticks;
byId('rollLines').innerHTML = gridLines;

// Notes, coloured by velocity
function noteColor(velocity) {
    if (velocity > 110) return '#ff3030';
    if (velocity <= 90) {
        return `rgb(${160 + (velocity - 84) * 9}, 218, 80)`;
    }
    return `rgb(217, ${218 - (velocity - 90) * 5}, 80)`;
}
byId('rollNotes').innerHTML = events.map(([pos, tick, pitch, velocity]) => {
    const [bar, beat] = pos.split(' ').map(Number);
    const x = Math.round(rollStart - 1 + ((bar - 1) * 4 + beat - 1) * rollBar / 4);
    const y = 115 + pitches.indexOf(pitch) * 16;
    const dash = Math.round(velocity / 9);
    return `<div class="note" style="left:${x}px; top:${y}px; width:21px; background-color:${noteColor(velocity)}; background-size:${dash}px 2px"></div>`;
}).join('');

// Event table
const digits = (pos, last) => `<div class="digits">${pos.split(' ').map(n => `<span>${n}</span>`).join('')}<span>${last}</span></div>`;
byId('events').innerHTML = events.slice(0, visibleEvents).map(([pos, tick, pitch, velocity]) => `
    <tr>
        <td></td><td></td><td>${digits(pos, tick)}</td><td class="status">Note</td>
        <td>10</td><td>${pitch}</td><td>${velocity}</td><td class="length">${digits('0 0 1', 0)}</td>
    </tr>`).join('');
```
